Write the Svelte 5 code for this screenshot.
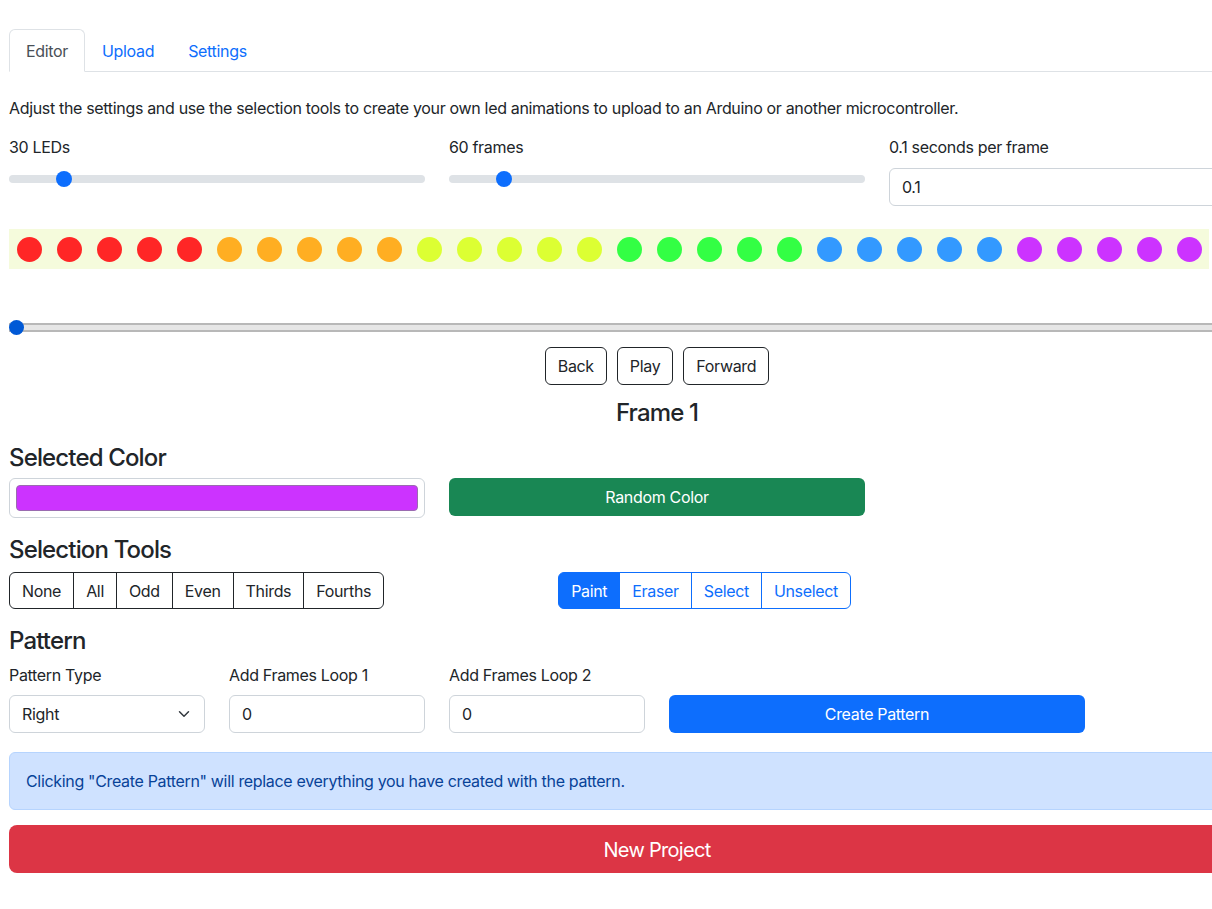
<script>
  const ledColors = ['#ff2626', '#ffae22', '#dcff33', '#33ff44', '#3399ff', '#cc33ff'];
  // five leds per colour
  const leds = ledColors.flatMap((c) => [c, c, c, c, c]);
  const selectionTools = ['None', 'All', 'Odd', 'Even', 'Thirds', 'Fourths'];
  const paintModes = ['Paint', 'Eraser', 'Select', 'Unselect'];
  const tabs = ['Editor', 'Upload', 'Settings'];
</script>

<div class="page">
  <ul class="tabs">
    {#each tabs as tab, i}
      <li><a href="#top" class="tab" class:active={i === 0}>{tab}</a></li>
    {/each}
  </ul>

  <p class="intro">Adjust the settings and use the selection tools to create your own led animations to upload to an Arduino or another microcontroller.</p>

  <div class="row settings">
    <div class="col-4">
      <label for="leds">30 LEDs</label>
      <input id="leds" class="range" type="range" min="0" max="255" value="30" />
    </div>
    <div class="col-4">
      <label for="frames">60 frames</label>
      <input id="frames" class="range" type="range" min="0" max="500" value="59" />
    </div>
    <div class="col-4">
      <label for="speed">0.1 seconds per frame</label>
      <input id="speed" class="control" type="text" value="0.1" />
    </div>
  </div>

  <div class="strip">
    {#each leds as color}
      <div class="led-cell"><span class="led" style="background: {color}"></span></div>
    {/each}
  </div>

  <input class="timeline" type="range" min="1" max="60" value="1" aria-label="Frame" />

  <div class="transport">
    <button class="btn outline">Back</button>
    <button class="btn outline">Play</button>
    <button class="btn outline">Forward</button>
  </div>
  <h4 class="frame">Frame 1</h4>

  <h4 class="color-title">Selected Color</h4>
  <div class="row">
    <div class="col-4"><input class="control color" type="color" value="#cc33ff" aria-label="Color" /></div>
    <div class="col-4"><button class="btn green wide">Random Color</button></div>
  </div>

  <h4 class="section-title">Selection Tools</h4>
  <div class="row">
    <div class="col-4">
      <div class="group dark">
        {#each selectionTools as t}<button>{t}</button>{/each}
      </div>
    </div>
    <div class="col-4 modes">
      <div class="group blue">
        {#each paintModes as m, i}<button class:on={i === 0}>{m}</button>{/each}
      </div>
    </div>
  </div>

  <h4 class="section-title">Pattern</h4>
  <div class="row pattern">
    <div class="col-2">
      <label for="ptype">Pattern Type</label>
      <select id="ptype" class="control select"><option>Right</option></select>
    </div>
    <div class="col-2">
      <label for="loop1">Add Frames Loop 1</label>
      <input id="loop1" class="control" type="text" value="0" />
    </div>
    <div class="col-2">
      <label for="loop2">Add Frames Loop 2</label>
      <input id="loop2" class="control" type="text" value="0" />
    </div>
    <div class="col-4 bottom"><button class="btn primary wide">Create Pattern</button></div>
  </div>

  <div class="alert">Clicking "Create Pattern" will replace everything you have created with the pattern.</div>

  <button class="btn danger">New Project</button>
</div>

<style>
  :global(body) {
    margin: 0;
    overflow: hidden;
    background: #fff;
  }

  .page {
    width: 1296px;
    margin-left: 9px;
    padding-top: 30px;
    font-family: Inter, "Liberation Sans", sans-serif;
    font-size: 16px;
    line-height: 24px;
    letter-spacing: -0.33px;
    color: #212529;
  }

  .tabs {
    display: flex;
    list-style: none;
    margin: 0 0 24px;
    padding: 0;
    border-bottom: 1px solid #dee2e6;
  }

  .tab {
    display: block;
    margin-top: -1px;
    padding: 9px 16px 8px;
    margin-bottom: -1px;
    border: 1px solid transparent;
    border-radius: 6px 6px 0 0;
    color: #0d6efd;
    text-decoration: none;
  }

  .tab.active {
    color: #495057;
    background: #fff;
    border-color: #dee2e6 #dee2e6 #fff;
  }

  .intro {
    margin: 0 0 15px;
  }

  .row {
    display: grid;
    grid-template-columns: repeat(12, 1fr);
    column-gap: 24px;
  }

  .col-2 { grid-column: span 2; }
  .col-4 { grid-column: span 4; }
  .bottom { display: flex; align-items: flex-end; }

  .modes {
    display: flex;
    justify-content: flex-end;
    padding-right: 14px;
  }

  label {
    display: block;
    margin-bottom: 8px;
  }

  .settings {
    margin-bottom: 23px;
  }

  .settings .control {
    margin-top: 9px;
  }

  .settings label[for="speed"] {
    margin-bottom: 0;
  }

  .range {
    display: block;
    width: 100%;
    height: 24px;
    margin: 0;
    background: transparent;
    appearance: none;
  }

  .range::-webkit-slider-runnable-track {
    height: 8px;
    background: #dee2e6;
    border-radius: 16px;
  }

  .range::-webkit-slider-thumb {
    appearance: none;
    width: 16px;
    height: 16px;
    margin-top: -4px;
    background: #0d6efd;
    border-radius: 50%;
  }

  .control {
    display: block;
    box-sizing: border-box;
    width: 100%;
    height: 38px;
    padding: 6px 12px;
    font: inherit;
    letter-spacing: inherit;
    color: #212529;
    background: #fff;
    border: 1px solid #ced4da;
    border-radius: 6px;
  }

  .select {
    appearance: none;
    padding-right: 36px;
    background-image: url("data:image/svg+xml,%3csvg xmlns='http://www.w3.org/2000/svg' viewBox='0 0 16 16'%3e%3cpath fill='none' stroke='%23343a40' stroke-linecap='round' stroke-linejoin='round' stroke-width='2' d='m2 5 6 6 6-6'/%3e%3c/svg%3e");
    background-repeat: no-repeat;
    background-position: right 12px center;
    background-size: 16px 12px;
  }

  .color {
    height: 40px;
    padding: 6px;
    appearance: none;
  }

  .color::-webkit-color-swatch-wrapper {
    padding: 0;
  }

  .color::-webkit-color-swatch {
    border: 1px solid #9a6bb0;
    border-radius: 4px;
  }

  .strip {
    display: flex;
    width: 1200px;
    height: 40px;
    background: #f5fbdc;
  }

  .led-cell {
    display: flex;
    flex: none;
    width: 40px;
    align-items: center;
    justify-content: center;
  }

  .led {
    display: block;
    width: 25px;
    height: 25px;
    border-radius: 50%;
  }

  .timeline {
    display: block;
    width: 100%;
    height: 16px;
    margin: 50px 0 12px;
    background: transparent;
    appearance: none;
  }

  .timeline::-webkit-slider-runnable-track {
    box-sizing: border-box;
    height: 9px;
    background: #e6e6e6;
    border-top: 2px solid #b8b8b8;
    border-bottom: 2px solid #b8b8b8;
  }

  .timeline::-webkit-slider-thumb {
    appearance: none;
    width: 15px;
    height: 15px;
    margin-top: -5px;
    background: #0059d6;
    border-radius: 50%;
  }

  .transport {
    display: flex;
    justify-content: center;
    gap: 10px;
  }

  .btn {
    box-sizing: border-box;
    height: 38px;
    padding: 6px 12px;
    font: inherit;
    letter-spacing: inherit;
    text-align: center;
    border: 1px solid transparent;
    border-radius: 6px;
    background: transparent;
  }

  .wide {
    width: 100%;
  }

  .outline {
    color: #212529;
    border-color: #212529;
  }

  .green {
    color: #fff;
    background: #198754;
  }

  .primary {
    color: #fff;
    background: #0d6efd;
  }

  .danger {
    display: block;
    width: 100%;
    height: 48px;
    padding: 9px 16px 7px;
    font-size: 20px;
    line-height: 30px;
    letter-spacing: -0.7px;
    color: #fff;
    background: #dc3545;
    border-radius: 8px;
  }

  h4 {
    margin: 0 0 8px;
    font-size: 24px;
    font-weight: 500;
    line-height: 29px;
    letter-spacing: -0.85px;
  }

  .frame {
    margin: 13px 0 0;
    text-align: center;
  }

  .color-title {
    margin: 16px 0 6px;
  }

  .section-title {
    margin-top: 17px;
  }

  .group {
    display: inline-flex;
  }

  .group button {
    height: 37px;
    margin-left: -1px;
    padding: 6px 12px;
    font: inherit;
    letter-spacing: inherit;
    background: transparent;
    border: 1px solid;
  }

  .group button:first-child {
    margin-left: 0;
    border-radius: 6px 0 0 6px;
  }

  .group button:last-child {
    border-radius: 0 6px 6px 0;
  }

  .dark button {
    color: #212529;
    border-color: #212529;
  }

  .blue button {
    color: #0d6efd;
    border-color: #0d6efd;
  }

  .blue button.on {
    color: #fff;
    background: #0d6efd;
  }

  .pattern {
    margin-bottom: 19px;
  }

  .alert {
    box-sizing: border-box;
    height: 58px;
    margin-bottom: 15px;
    padding: 16px;
    color: #084298;
    background: #cfe2ff;
    border: 1px solid #b6d4fe;
    border-radius: 6px;
  }
</style>
